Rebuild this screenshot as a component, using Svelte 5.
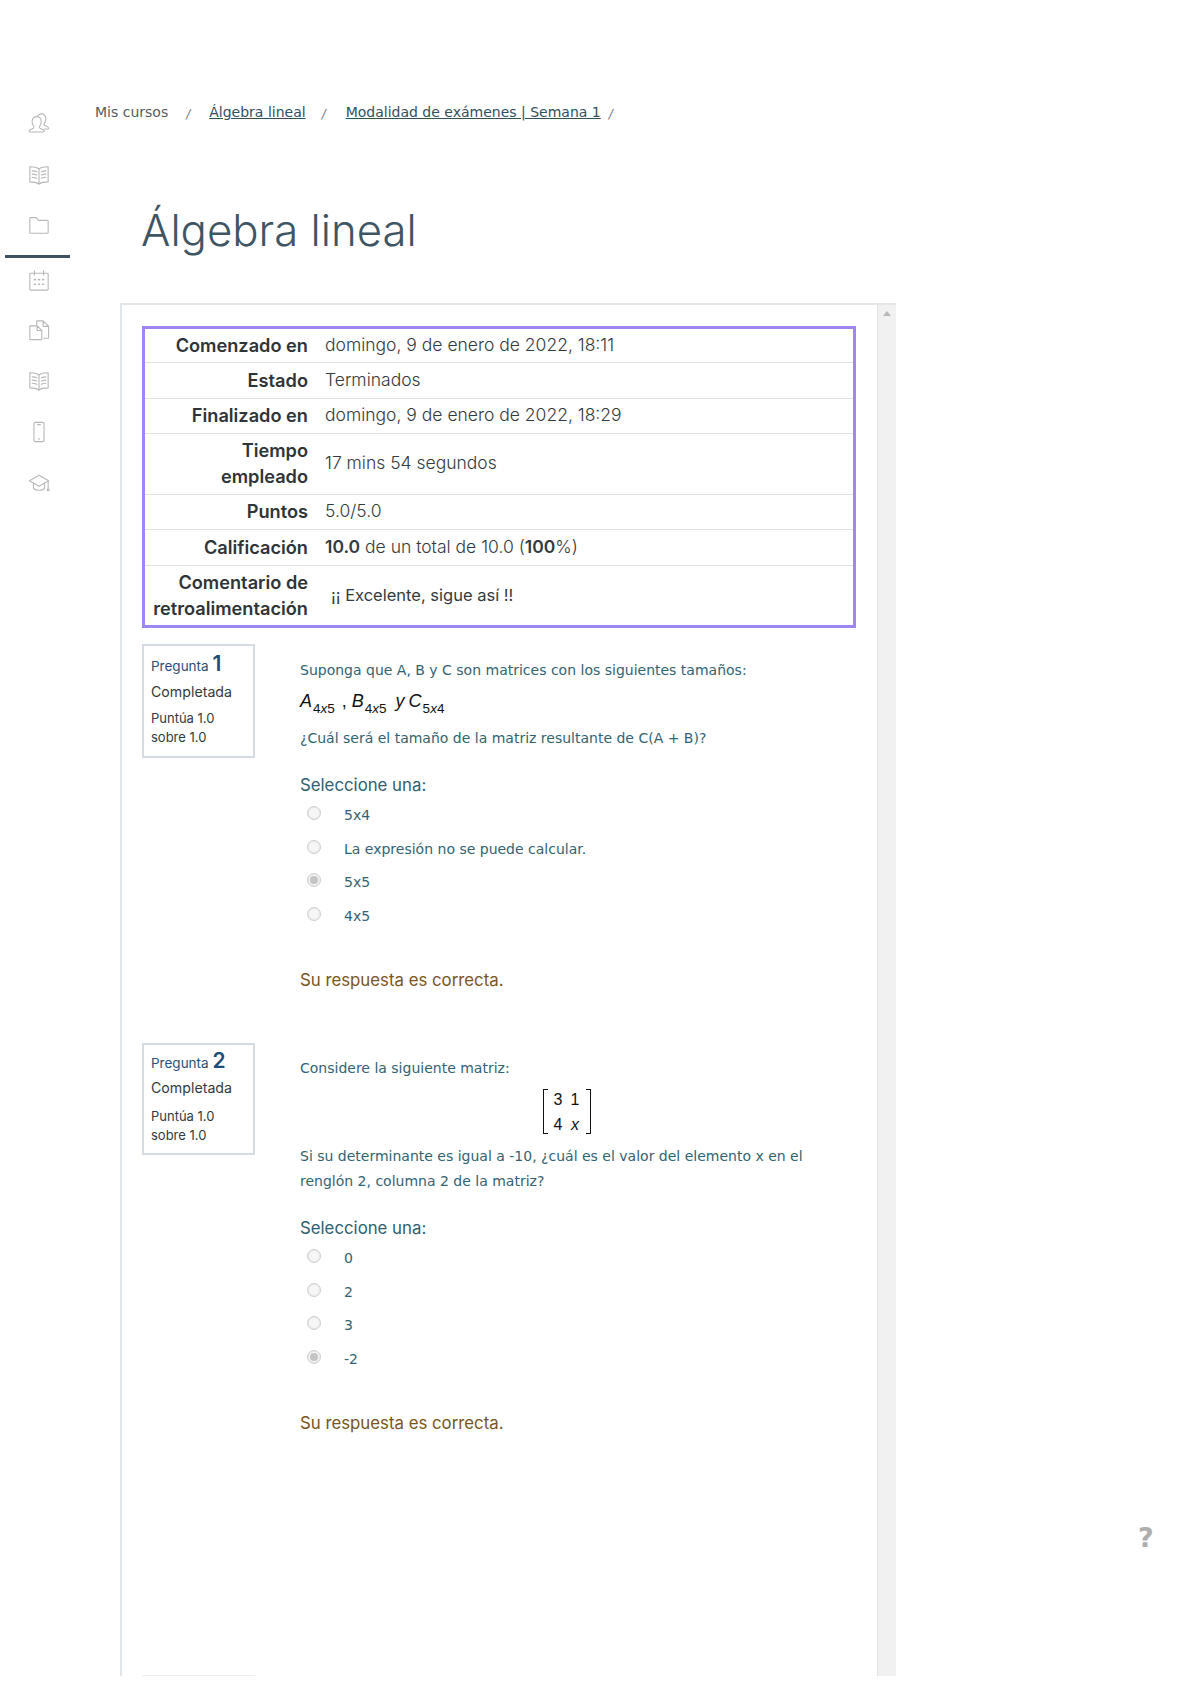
<script>
  const summary = [
    { k: ['Comenzado en'], v: 'domingo, 9 de enero de 2022, 18:11', h: 34 },
    { k: ['Estado'], v: 'Terminados', h: 36 },
    { k: ['Finalizado en'], v: 'domingo, 9 de enero de 2022, 18:29', h: 35 },
    { k: ['Tiempo', 'empleado'], v: '17 mins 54 segundos', h: 61 },
    { k: ['Puntos'], v: '5.0/5.0', h: 35 },
    { k: ['Calificación'], grade: true, h: 36 },
    { k: ['Comentario de', 'retroalimentación'], v: '¡¡ Excelente, sigue así !!', fb: true, h: 59 }
  ];
  const q1 = [
    { t: '5x4' },
    { t: 'La expresión no se puede calcular.' },
    { t: '5x5', on: true },
    { t: '4x5' }
  ];
  const q2 = [
    { t: '0' },
    { t: '2' },
    { t: '3' },
    { t: '-2', on: true }
  ];
</script>

{#snippet options(list)}
  <div class="sel">Seleccione una:</div>
  <div class="opts">
    {#each list as o}
      <div class="opt">
        <span class="radio" class:on={o.on}></span>
        <span class="optt">{o.t}</span>
      </div>
    {/each}
  </div>
  <div class="fb">Su respuesta es correcta.</div>
{/snippet}

{#snippet info(n, cls)}
  <aside class="info {cls}">
    <div class="qno">Pregunta <b>{n}</b></div>
    <div class="st">Completada</div>
    <div class="gr">Puntúa 1.0<br />sobre 1.0</div>
  </aside>
{/snippet}

<div class="page">
  <nav class="rail">
    <svg class="ic i1" viewBox="0 0 24 24"><path d="M9.500 4c-3 0-5 2.300-5 5.500 0 2 .7 3.800 1.800 5 .3.800.2 1.500-.3 2-1.500 1-4.500 1.200-4.800 3 0 .8.500 1.200 1.300 1.200h14c.8 0 1.300-.5 1.200-1.200-.3-1.800-3.300-2-4.800-3-.5-.5-.6-1.200-.3-2 1.100-1.200 1.800-3 1.800-5 0-3.200-2-5.500-4.900-5.500z"/><path d="M10.500 3.500C11.300 2 12.800 1 14.500 1c2.900 0 4.900 2.300 4.900 5.500 0 2-.7 3.800-1.800 5-.3.800-.2 1.400.3 1.900 1.300.9 4.300 1.200 4.600 3 0 .8-.4 1.100-1.100 1.100h-3.500"/></svg>
    <svg class="ic i2" viewBox="0 0 24 24"><path d="M12 5.500C9.500 3.500 5 3 2 3v16.500c3 0 7.500.5 10 2.500 2.500-2 7-2.500 10-2.500V3c-3 0-7.500.5-10 2.500zM12 5.500V22"/><path d="M4.500 7.500c2 0 3.500.3 5 1M4.500 11c2 0 3.500.3 5 1M4.500 14.500c2 0 3.500.3 5 1M19.500 7.500c-2 0-3.500.3-5 1M19.500 11c-2 0-3.500.3-5 1M19.500 14.500c-2 0-3.500.3-5 1"/></svg>
    <svg class="ic i3" viewBox="0 0 24 24"><path d="M2 5c0-.6.4-1 1-1h6l2.500 3H21c.6 0 1 .4 1 1v12c0 .6-.4 1-1 1H3c-.6 0-1-.4-1-1z"/></svg>
    <div class="rule"></div>
    <svg class="ic i4" viewBox="0 0 24 24"><path d="M3 3.500h18c.6 0 1 .4 1 1V21c0 .6-.4 1-1 1H3c-.6 0-1-.4-1-1V4.500c0-.6.4-1 1-1zM7 1v4.500M17 1v4.500"/><path class="dots" d="M7 10.500h1M11.500 10.500h1M16 10.500h1M7 15.500h1M11.500 15.500h1M16 15.500h1"/></svg>
    <svg class="ic i5" viewBox="0 0 24 24"><path d="M2 7.500h8l5 5V22c0 .3-.2.500-.5.500h-12c-.3 0-.5-.2-.5-.5zM10 7.500v5h5"/><path d="M9.500 7V2h7l6 6v12.500c0 .3-.2.500-.5.500h-5M16.500 2v6h6"/></svg>
    <svg class="ic i6" viewBox="0 0 24 24"><path d="M12 5.500C9.500 3.500 5 3 2 3v16.500c3 0 7.500.5 10 2.500 2.500-2 7-2.500 10-2.500V3c-3 0-7.500.5-10 2.500zM12 5.500V22"/><path d="M4.500 7.500c2 0 3.500.3 5 1M4.500 11c2 0 3.500.3 5 1M4.500 14.500c2 0 3.500.3 5 1M19.500 7.500c-2 0-3.500.3-5 1M19.500 11c-2 0-3.500.3-5 1M19.500 14.500c-2 0-3.500.3-5 1"/></svg>
    <svg class="ic i7" viewBox="0 0 24 24"><rect x="6.500" y="1.500" width="11" height="21" rx="1.500"/><path d="M10.500 4h3M11.500 19.500h1"/></svg>
    <svg class="ic i8" viewBox="0 0 24 24"><path d="M12 3.500 1.500 9.500 12 15.500l10.500-6z"/><path d="M6 12v6c2.500 2.500 9.500 2.500 12 0v-6M22 10v8"/><circle cx="22" cy="19.500" r="1"/></svg>
  </nav>

  <main class="main">
    <div class="crumbs">
      <span class="c1">Mis cursos</span><i class="s1">/</i>
      <a class="c2">Álgebra lineal</a><i class="s2">/</i>
      <a class="c3">Modalidad de exámenes | Semana 1</a><i class="s3">/</i>
    </div>
    <h1>Álgebra lineal</h1>

    <div class="frame">
      <div class="scroll">
        <div class="summary">
          {#each summary as r}
            <div class="row" style="height:{r.h}px">
              <div class="k">{#each r.k as l}<div>{l}</div>{/each}</div>
              <div class="v" class:vfb={r.fb}>
                {#if r.grade}<b>10.0</b> de un total de 10.0 (<b>100</b>%){:else}{r.v}{/if}
              </div>
            </div>
          {/each}
        </div>

        <section class="q q1">
          {@render info(1, 'one')}
          <div class="body">
            <p class="t first">Suponga que A, B y C son matrices con los siguientes tamaños:</p>
            <div class="formula">
              <i>A</i><sub>4<i>x</i>5</sub><span class="cm">,</span><i>B</i><sub>4<i>x</i>5</sub><i class="y">y</i><i>C</i><sub>5<i>x</i>4</sub>
            </div>
            <p class="t">¿Cuál será el tamaño de la matriz resultante de C(A + B)?</p>
            {@render options(q1)}
          </div>
        </section>

        <section class="q q2">
          {@render info(2, 'two')}
          <div class="body">
            <p class="t first">Considere la siguiente matriz:</p>
            <div class="matrix">
              <div class="brk l"></div>
              <div class="cells"><span>3</span><span>1</span><span>4</span><span><i>x</i></span></div>
              <div class="brk r"></div>
            </div>
            <p class="t para">Si su determinante es igual a -10, ¿cuál es el valor del elemento x en el renglón 2, columna 2 de la matriz?</p>
            {@render options(q2)}
          </div>
        </section>

        <div class="next"></div>
      </div>
      <div class="bar"><span class="arrow"></span></div>
    </div>
  </main>

  <div class="help">?</div>
</div>

<style>
  :global(body) { margin: 0; background: #fff; }
  .page {
    position: relative;
    width: 1200px;
    height: 1696px;
    overflow: hidden;
    display: flex;
    font-family: "Inter", "Noto Sans", sans-serif;
  }
  .rail {
    width: 95px;
    flex: none;
    padding-top: 113px;
    display: flex;
    flex-direction: column;
    align-items: flex-start;
  }
  .ic {
    display: block;
    width: 22px;
    height: 22px;
    margin-left: 28px;
    fill: none;
    stroke: #b8b8b8;
    stroke-width: 1.2;
    stroke-linejoin: round;
    stroke-linecap: round;
    flex: none;
  }
  .dots { stroke-width: 1.8; }
  .i2 { margin-top: 29px; }
  .i3 { margin-top: 28px; }
  .rule { width: 65px; height: 3px; background: #3d5160; margin: 19px 0 0 5px; }
  .i4 { margin-top: 12px; }
  .i5 { margin-top: 27px; }
  .i6 { margin-top: 29px; }
  .i7 { margin-top: 29px; }
  .i8 { margin-top: 29px; }

  .main { flex: none; width: 825px; }
  .crumbs {
    height: 27px;
    margin-top: 104px;
    font-family: "DejaVu Sans", sans-serif;
    font-size: 14px;
    color: #555b60;
    white-space: nowrap;
    display: flex;
    align-items: flex-start;
    line-height: 17px;
  }
  .crumbs a { color: #33505f; text-decoration: underline; }
  .crumbs i { font-size: 12px; color: #6c757d; margin-top: 2px; }
  .s1 { margin-left: 18px; }
  .c2 { margin-left: 19px; }
  .s2 { margin-left: 16px; }
  .c3 { margin-left: 20px; }
  .s3 { margin-left: 8px; }

  h1 {
    margin: 74px 0 0 46px;
    height: 98px;
    font-family: "Inter", sans-serif;
    font-weight: 300;
    font-size: 43.700px;
    line-height: 52px;
    color: #3f5563;
  }
  .frame {
    margin-left: 25px;
    width: 776px;
    height: 1373px;
    display: flex;
    border-top: 2px solid #e4e7ea;
    border-left: 2px solid #e0e6ea;
    box-sizing: border-box;
    overflow: hidden;
  }
  .scroll { width: 756px; flex: none; padding-left: 20px; box-sizing: border-box; border-right: 1px solid #dfe3e6; }
  .bar { width: 18px; flex: none; background: #f1f1f1; position: relative; }
  .arrow {
    position: absolute;
    top: 6px;
    left: 5px;
    border-left: 4px solid transparent;
    border-right: 4px solid transparent;
    border-bottom: 5px solid #b8b8b8;
  }
  .summary {
    margin-top: 21px;
    width: 714px;
    border: 3px solid #a086f2;
    box-sizing: border-box;
  }
  .row {
    display: flex;
    align-items: center;
    border-bottom: 1px solid #dee2e6;
    box-sizing: border-box;
    padding-bottom: 2px;
    font-size: 17.500px;
    line-height: 26px;
    color: #343a40;
  }
  .row:last-child { border-bottom: 0; }
  .k {
    width: 163px;
    flex: none;
    text-align: right;
    font-weight: 600;
    font-size: 18.200px;
    color: #2f3438;
  }
  .v { padding-left: 17px; font-weight: 300; white-space: nowrap; }
  .v b { font-weight: 600; }
  .vfb { font-size: 16.500px; padding-left: 23px; font-weight: 400; }

  .q { display: flex; }
  .q1 { margin-top: 16px; height: 399px; }
  .q2 { height: 632px; }
  .info {
    width: 113px;
    flex: none;
    box-sizing: border-box;
    border: 2px solid #d5dbe3;
    padding-left: 7px;
    font-size: 13.500px;
    color: #343a40;
    white-space: nowrap;
  }
  .one { height: 114px; padding-top: 5px; }
  .two { height: 112px; padding-top: 3px; }
  .qno { color: #2c5076; line-height: 26px; }
  .one .qno { height: 29px; }
  .two .qno { height: 28px; }
  .qno b { font-size: 21px; font-weight: 600; color: #1f4c78; }
  .st { line-height: 24px; font-size: 14.200px; }
  .one .st { height: 29px; }
  .two .st { height: 31px; }
  .gr { line-height: 19px; font-size: 13px; }
  .body { margin-left: 45px; width: 560px; }
  .t {
    margin: 0;
    font-family: "DejaVu Sans", sans-serif;
    font-size: 14px;
    line-height: 25px;
    color: #336373;
  }
  .first { margin-top: 14px; }
  .q2 .first { margin-top: 13px; }
  .formula {
    font-family: "Liberation Sans", sans-serif;
    font-size: 18px;
    height: 43px;
    line-height: 37px;
    color: #111;
    white-space: nowrap;
  }
  .formula sub { font-size: 13.500px; vertical-align: -6px; line-height: 0; margin-left: 1px; }
  .cm { margin: 0 5px 0 7px; }
  .y { margin: 0 4px 0 9px; }
  .sel {
    margin-top: 22px;
    font-size: 16.800px;
    line-height: 24px;
    color: #2f6070;
  }
  .opts { margin-top: 7px; }
  .opt { height: 33.500px; display: flex; align-items: flex-start; }
  .radio {
    width: 14px;
    height: 14px;
    border: 1px solid #cfcfcf;
    border-radius: 50%;
    background: #f6f6f6;
    margin: 2px 0 0 7px;
    flex: none;
    position: relative;
    box-sizing: border-box;
    box-shadow: inset 0 0 0 1px #e8e8e8;
  }
  .radio.on::after {
    content: "";
    position: absolute;
    inset: 2px;
    background: #c4c4c4;
    border-radius: 50%;
  }
  .optt {
    margin-left: 23px;
    font-family: "DejaVu Sans", sans-serif;
    font-size: 14px;
    line-height: 22px;
    color: #336373;
  }
  .fb {
    margin-top: 29px;
    font-size: 16.800px;
    line-height: 26px;
    color: #7a5520;
  }
  .matrix {
    height: 63px;
    width: 48px;
    margin-left: 243px;
    display: flex;
    font-family: "Liberation Sans", sans-serif;
    color: #111;
    box-sizing: border-box;
  }
  .brk { width: 5px; height: 45px; margin-top: 8px; border: 1px solid #111; box-sizing: border-box; flex: none; }
  .brk.l { border-right: 0; }
  .brk.r { border-left: 0; }
  .cells {
    flex: 1;
    display: grid;
    grid-template-columns: 18px 16px;
    grid-auto-rows: 25px;
    justify-content: start;
    align-content: start;
    font-size: 16px;
    line-height: 25px;
    text-align: center;
    padding: 6px 0 0 1px;
  }
  .para { width: 510px; }
  .next { width: 113px; height: 2px; background: #eee; }
  .help {
    position: absolute;
    left: 1138px;
    top: 1523px;
    font-family: "DejaVu Sans", sans-serif;
    font-weight: 700;
    font-size: 27px;
    line-height: 30px;
    color: #aeaeae;
  }
</style>
